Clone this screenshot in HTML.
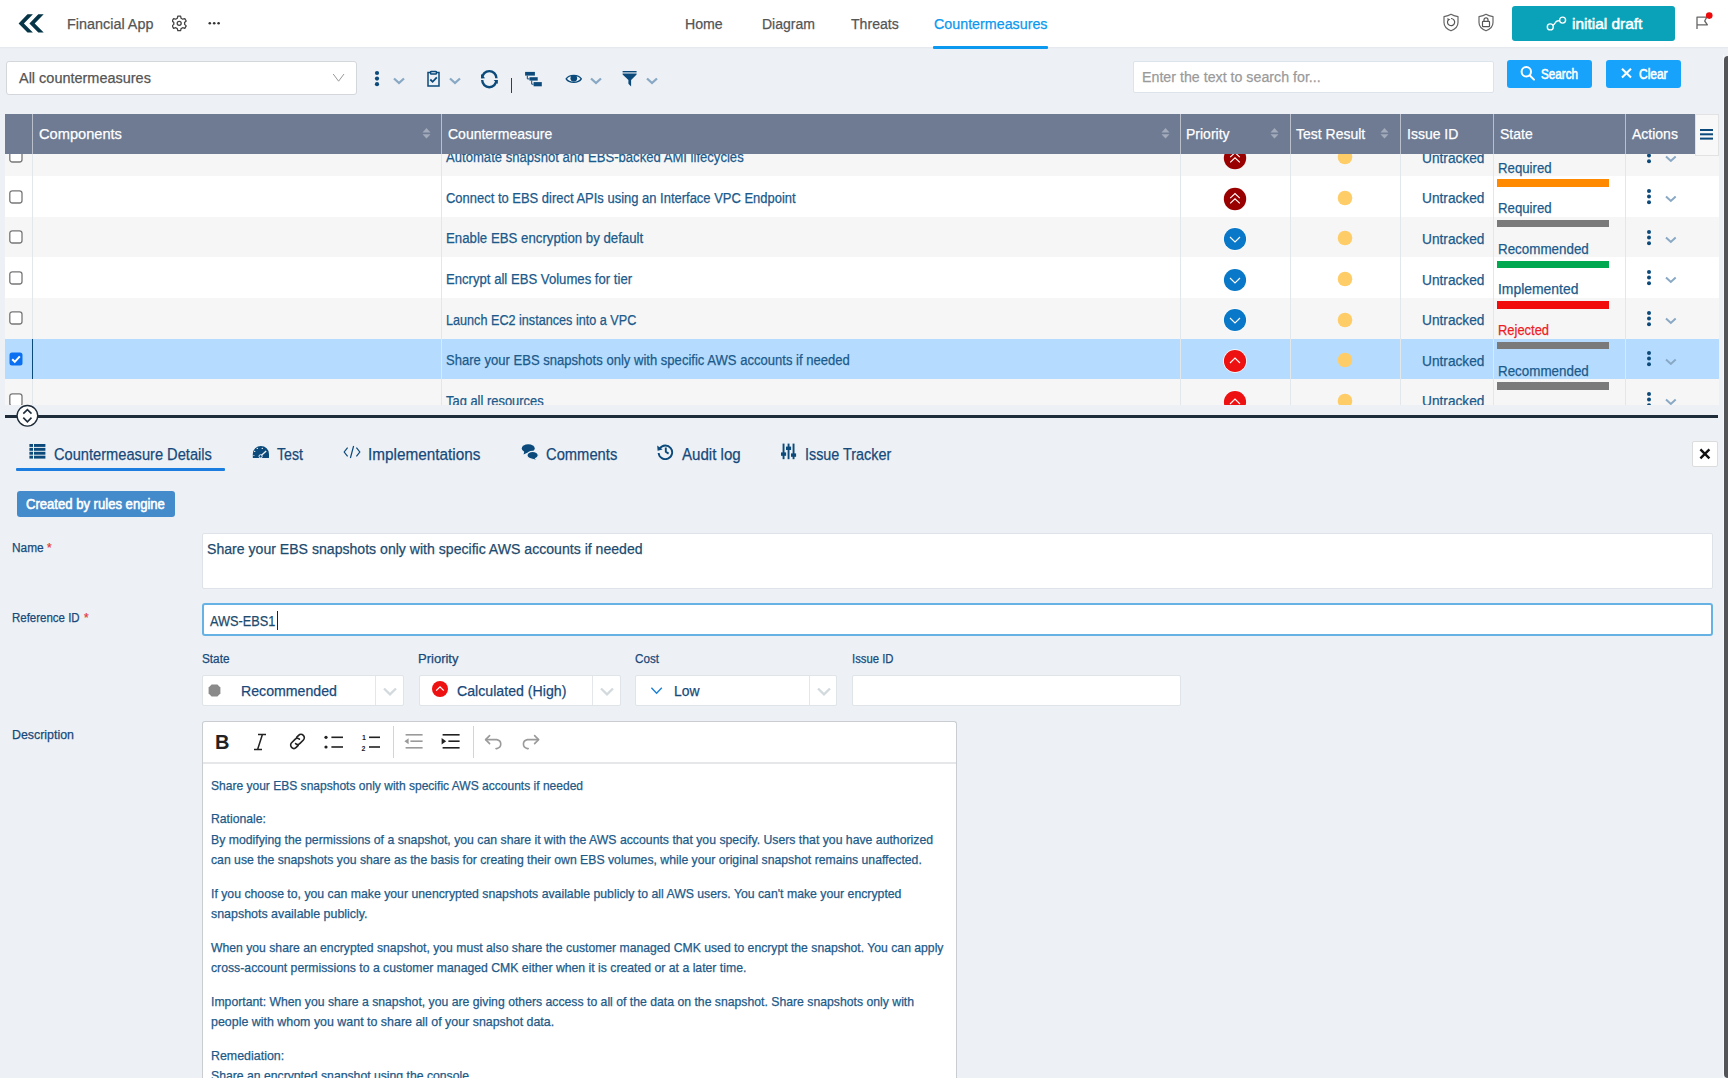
<!DOCTYPE html><html><head><meta charset="utf-8"><style>
html,body{margin:0;padding:0;width:1728px;height:1080px;overflow:hidden;background:#edf1f5;font-family:"Liberation Sans",sans-serif;}
.a{position:absolute;box-sizing:border-box;}
.t{position:absolute;white-space:nowrap;transform-origin:0 0;-webkit-text-stroke:0.25px currentColor;}
</style></head><body>
<div class="a" style="left:0px;top:0px;width:1728px;height:47px;background:#fff;"></div>
<div class="a" style="left:0px;top:47px;width:1728px;height:2px;background:linear-gradient(#e4e8ec,#edf1f5);"></div>
<svg class="a" style="left:14px;top:10px;" width="34" height="26" viewBox="0 0 34 26"><polygon fill="#063548" points="13.5,4.2 18.9,4.2 9.9,13.5 18.9,22.6 13.5,22.6 4.6,13.5"/><polygon fill="#063548" points="24.3,4.2 29.7,4.2 20.7,13.5 29.7,22.6 24.3,22.6 15.4,13.5"/></svg>
<div class="t" style="left:66.60px;top:15.63px;font-size:15.20px;line-height:15.20px;color:#555;transform:scaleX(0.9477);">Financial App</div>
<svg class="a" style="left:172px;top:15px;" width="16" height="17" viewBox="0 0 16 17"><g fill="none" stroke="#444" stroke-width="1.3" stroke-linejoin="round"><path d="M5.8,1.2 h2.8 l0.5,2.1 l1.6,0.9 l2.1,-0.6 l1.4,2.4 l-1.6,1.5 v1.9 l1.6,1.5 l-1.4,2.4 l-2.1,-0.6 l-1.6,0.9 l-0.5,2.1 h-2.8 l-0.5,-2.1 l-1.6,-0.9 l-2.1,0.6 l-1.4,-2.4 l1.6,-1.5 v-1.9 l-1.6,-1.5 l1.4,-2.4 l2.1,0.6 l1.6,-0.9 z"/><circle cx="7.2" cy="8.3" r="2"/></g></svg>
<svg class="a" style="left:206px;top:20px;" width="16" height="6" viewBox="0 0 16 6"><g fill="#333"><circle cx="3.8" cy="3.2" r="1.3"/><circle cx="8.2" cy="3.2" r="1.3"/><circle cx="12.6" cy="3.2" r="1.3"/></g></svg>
<div class="t" style="left:684.60px;top:15.63px;font-size:15.20px;line-height:15.20px;color:#555;transform:scaleX(0.9314);">Home</div>
<div class="t" style="left:761.70px;top:15.63px;font-size:15.20px;line-height:15.20px;color:#555;transform:scaleX(0.9224);">Diagram</div>
<div class="t" style="left:850.50px;top:15.63px;font-size:15.20px;line-height:15.20px;color:#555;transform:scaleX(0.9277);">Threats</div>
<div class="t" style="left:934.00px;top:15.63px;font-size:15.20px;line-height:15.20px;color:#0b98ef;transform:scaleX(0.9401);">Countermeasures</div>
<div class="a" style="left:933px;top:46px;width:115px;height:2.5px;background:#0b98ef;border-radius:1px;"></div>
<svg class="a" style="left:1443px;top:13px;" width="16" height="19" viewBox="0 0 16 19"><path d="M8,1.3 C10,2.6 12.3,3.2 15,3.6 V9.5 C15,13.5 12,16.2 8,17.8 C4,16.2 1,13.5 1,9.5 V3.6 C3.7,3.2 6,2.6 8,1.3 Z" fill="none" stroke="#666" stroke-width="1.2" stroke-linejoin="round"/><path d="M5.3,6.8 A3.6,3.6 0 1 0 8,5.5" fill="none" stroke="#555" stroke-width="1.2"/><path d="M4.2,5 L5,7.8 L7.4,6.6 Z" fill="#555"/></svg>
<svg class="a" style="left:1478px;top:13px;" width="16" height="19" viewBox="0 0 16 19"><path d="M8,1.3 C10,2.6 12.3,3.2 15,3.6 V9.5 C15,13.5 12,16.2 8,17.8 C4,16.2 1,13.5 1,9.5 V3.6 C3.7,3.2 6,2.6 8,1.3 Z" fill="none" stroke="#666" stroke-width="1.2" stroke-linejoin="round"/><rect x="4.5" y="8.3" width="7" height="5.4" rx="0.8" fill="none" stroke="#555" stroke-width="1.2"/><path d="M6,8.3 V6.8 A2,2 0 0 1 10,6.8 V8.3" fill="none" stroke="#555" stroke-width="1.2"/></svg>
<div class="a" style="left:1512px;top:5.5px;width:163px;height:35.5px;background:#0aa2b8;border-radius:3px;"></div>
<svg class="a" style="left:1545px;top:16px;" width="24" height="16" viewBox="0 0 24 16"><g fill="none" stroke="#fff" stroke-width="1.4"><circle cx="5.3" cy="10.9" r="3"/><circle cx="17.6" cy="4.1" r="3"/><path d="M7.6,9.4 C10.5,8.5 9.8,5.5 12.3,5 L14.6,4.6"/></g></svg>
<div class="t" style="left:1572.00px;top:15.53px;font-size:15.20px;line-height:15.20px;color:#fff;-webkit-text-stroke:0.55px currentColor;transform:scaleX(1.0171);">initial draft</div>
<svg class="a" style="left:1692px;top:10px;" width="22" height="22" viewBox="0 0 22 22"><path d="M5,19 V7.2 H14.7 L12.7,11 L15.4,14.8 H5" fill="none" stroke="#666" stroke-width="1.3" stroke-linejoin="round"/><circle cx="17.25" cy="5.6" r="3.3" fill="#ee0a0a"/></svg>
<div class="a" style="left:6px;top:60.5px;width:351px;height:34px;background:#fff;border:1px solid #d3d6da;border-radius:3px;"></div>
<div class="t" style="left:18.75px;top:70.13px;font-size:15.20px;line-height:15.20px;color:#555;transform:scaleX(0.9527);">All countermeasures</div>
<svg class="a" style="left:330px;top:70px;" width="16" height="14" viewBox="0 0 16 14"><path d="M3.2,4 L8.6,11.2 L14,4" fill="none" stroke="#999" stroke-width="1"/></svg>
<svg class="a" style="left:373.4px;top:69px;" width="8" height="19" viewBox="0 0 8 19"><g fill="#0b4a7b"><circle cx="4" cy="4" r="2.1"/><circle cx="4" cy="9.6" r="2.1"/><circle cx="4" cy="15.2" r="2.1"/></g></svg>
<svg class="a" style="left:393px;top:77px;" width="12" height="8" viewBox="0 0 12 8"><path d="M1,1.5 L6.0,6 L11,1.5" fill="none" stroke="#88a8c4" stroke-width="2.3"/></svg>
<svg class="a" style="left:426px;top:70px;" width="15" height="18" viewBox="0 0 15 18"><g fill="none" stroke="#0b4a7b" stroke-width="1.5"><path d="M4,2.6 H2 V16 H13 V2.6 H11"/><rect x="4.6" y="1.4" width="5.8" height="2.6" rx="0.6"/><path d="M4.3,9.5 L6.6,11.8 L10.8,7.4" stroke-width="1.8"/></g></svg>
<svg class="a" style="left:449px;top:77px;" width="12" height="8" viewBox="0 0 12 8"><path d="M1,1.5 L6.0,6 L11,1.5" fill="none" stroke="#88a8c4" stroke-width="2.3"/></svg>
<svg class="a" style="left:479px;top:69px;" width="21" height="21" viewBox="0 0 21 21"><g fill="none" stroke="#0b4a7b" stroke-width="2.4"><path d="M3.2,9.2 A7.1,7.1 0 0 1 17.4,9.2"/><path d="M3.2,11.1 A7.1,7.1 0 0 0 17.4,11.1"/></g><path d="M2,4.9 L2,9.2 L6.2,9.2 Z" fill="#0b4a7b"/><path d="M14.6,11.1 L18.8,11.1 L18.8,15.1 Z" fill="#0b4a7b"/></svg>
<div class="a" style="left:511px;top:78px;width:1.3px;height:14.7px;background:#0b4a7b;"></div>
<svg class="a" style="left:524px;top:71px;" width="20" height="17" viewBox="0 0 20 17"><g fill="#0b4a7b"><rect x="1.1" y="0.9" width="9.8" height="3.7"/><rect x="5.5" y="6.2" width="8.2" height="3.4"/><rect x="9.6" y="11.1" width="8.2" height="4.2"/></g><g fill="none" stroke="#0b4a7b" stroke-width="1"><path d="M3.3,4.6 V7.9 H5.5"/><path d="M7.7,9.6 V13.2 H9.6"/></g></svg>
<svg class="a" style="left:565px;top:73px;" width="18" height="13" viewBox="0 0 18 13"><path d="M1.2,5.8 C4,1.2 13.5,1.2 16.3,5.8 C13.5,10.4 4,10.4 1.2,5.8 Z" fill="none" stroke="#0b4a7b" stroke-width="1.4"/><circle cx="8.8" cy="5.2" r="3.3" fill="#0b4a7b"/></svg>
<svg class="a" style="left:590px;top:77px;" width="12" height="8" viewBox="0 0 12 8"><path d="M1,1.5 L6.0,6 L11,1.5" fill="none" stroke="#88a8c4" stroke-width="2.3"/></svg>
<svg class="a" style="left:622px;top:70px;" width="16" height="18" viewBox="0 0 16 18"><g fill="#0b4a7b"><rect x="0.6" y="1" width="14" height="1.4"/><path d="M0.6,3.4 H14.6 V4.6 L9.1,10 V16.4 L6.4,13.8 V10 L0.6,4.6 Z"/></g></svg>
<svg class="a" style="left:645.5px;top:77px;" width="12" height="8" viewBox="0 0 12 8"><path d="M1,1.5 L6.0,6 L11,1.5" fill="none" stroke="#88a8c4" stroke-width="2.3"/></svg>
<div class="a" style="left:1133px;top:60.5px;width:361px;height:32px;background:#fff;border:1px solid #dce3ea;border-radius:2px;"></div>
<div class="t" style="left:1141.60px;top:69.33px;font-size:15.20px;line-height:15.20px;color:#9a9a9a;transform:scaleX(0.9366);">Enter the text to search for...</div>
<div class="a" style="left:1507px;top:60px;width:85px;height:28.2px;background:#17a3fc;border-radius:3px;"></div>
<svg class="a" style="left:1519px;top:65px;" width="18" height="17" viewBox="0 0 18 17"><g fill="none" stroke="#fff" stroke-width="2"><circle cx="7.3" cy="6.8" r="4.7"/><path d="M10.6,10.2 L15,14.6" stroke-linecap="round"/></g></svg>
<div class="t" style="left:1540.80px;top:67.64px;font-size:13.77px;line-height:13.77px;color:#fff;-webkit-text-stroke:0.55px currentColor;transform:scaleX(0.8473);">Search</div>
<div class="a" style="left:1605.7px;top:60px;width:75.5px;height:28.2px;background:#17a3fc;border-radius:3px;"></div>
<svg class="a" style="left:1620px;top:67px;" width="13" height="12" viewBox="0 0 13 12"><path d="M2,1.8 L11,10.4 M11,1.8 L2,10.4" stroke="#fff" stroke-width="2.1"/></svg>
<div class="t" style="left:1638.60px;top:67.64px;font-size:13.77px;line-height:13.77px;color:#fff;-webkit-text-stroke:0.55px currentColor;transform:scaleX(0.8687);">Clear</div>
<div class="a" style="left:5px;top:113.5px;width:1689.7px;height:40.5px;background:#6e7b93;"></div>
<div class="a" style="left:5px;top:154px;width:1713.5px;height:250.7px;overflow:hidden;">
<div class="a" style="left:0px;top:-18.4px;width:1713.5px;height:41.0px;background:#f6f6f6;"></div>
<div class="a" style="left:0px;top:22.2px;width:1713.5px;height:41.0px;background:#ffffff;"></div>
<div class="a" style="left:0px;top:62.8px;width:1713.5px;height:41.0px;background:#f6f6f6;"></div>
<div class="a" style="left:0px;top:103.4px;width:1713.5px;height:41.0px;background:#ffffff;"></div>
<div class="a" style="left:0px;top:144.0px;width:1713.5px;height:41.0px;background:#f6f6f6;"></div>
<div class="a" style="left:0px;top:184.6px;width:1713.5px;height:41.0px;background:#b5dcfe;"></div>
<div class="a" style="left:0px;top:225.2px;width:1713.5px;height:41.0px;background:#f6f6f6;"></div>
<svg class="a" style="left:4px;top:-5.100000000000005px;" width="14" height="14" viewBox="0 0 14 14"><rect x="0.8" y="0.8" width="12.2" height="12.2" rx="2.5" fill="#fff" stroke="#777" stroke-width="1.3"/></svg>
<div class="t" style="left:440.80px;top:-3.76px;font-size:14.25px;line-height:14.25px;color:#1b5a8b;transform:scaleX(0.9189);">Automate snapshot and EBS-backed AMI lifecycles</div>
<svg class="a" style="left:1218px;top:-8.100000000000005px;" width="24" height="24" viewBox="0 0 24 24"><circle cx="12" cy="12" r="11.2" fill="#990000"/><path d="M7.2,11.2 L12,6.6 L16.8,11.2 M7.2,16.4 L12,11.8 L16.8,16.4" fill="none" stroke="#fff" stroke-width="1.1"/></svg>
<svg class="a" style="left:1332px;top:-4.900000000000005px;" width="16" height="16" viewBox="0 0 16 16"><circle cx="8" cy="8" r="7.3" fill="#ffcd68"/></svg>
<div class="t" style="left:1416.50px;top:-3.26px;font-size:14.25px;line-height:14.25px;color:#1b5a8b;transform:scaleX(0.9618);">Untracked</div>
<div class="t" style="left:1493.00px;top:6.64px;font-size:14.25px;line-height:14.25px;color:#1b5a8b;transform:scaleX(0.9282);">Required</div>
<div class="a" style="left:1492.2px;top:25.4px;width:111.8px;height:7.4px;background:#ff8a00;"></div>
<svg class="a" style="left:1640px;top:-7.700000000000005px;" width="8" height="19" viewBox="0 0 8 19"><g fill="#0b4a7b"><circle cx="4" cy="4" r="2"/><circle cx="4" cy="9.6" r="2"/><circle cx="4" cy="15.2" r="2"/></g></svg>
<svg class="a" style="left:1660px;top:0.4999999999999951px;" width="11.7" height="7.9" viewBox="0 0 11.7 7.9"><path d="M1,1.5 L5.85,5.9 L10.7,1.5" fill="none" stroke="#88a8c4" stroke-width="2"/></svg>
<svg class="a" style="left:4px;top:35.499999999999986px;" width="14" height="14" viewBox="0 0 14 14"><rect x="0.8" y="0.8" width="12.2" height="12.2" rx="2.5" fill="#fff" stroke="#777" stroke-width="1.3"/></svg>
<div class="t" style="left:440.80px;top:36.84px;font-size:14.25px;line-height:14.25px;color:#1b5a8b;transform:scaleX(0.9100);">Connect to EBS direct APIs using an Interface VPC Endpoint</div>
<svg class="a" style="left:1218px;top:32.499999999999986px;" width="24" height="24" viewBox="0 0 24 24"><circle cx="12" cy="12" r="11.2" fill="#990000"/><path d="M7.2,11.2 L12,6.6 L16.8,11.2 M7.2,16.4 L12,11.8 L16.8,16.4" fill="none" stroke="#fff" stroke-width="1.1"/></svg>
<svg class="a" style="left:1332px;top:35.69999999999999px;" width="16" height="16" viewBox="0 0 16 16"><circle cx="8" cy="8" r="7.3" fill="#ffcd68"/></svg>
<div class="t" style="left:1416.50px;top:37.34px;font-size:14.25px;line-height:14.25px;color:#1b5a8b;transform:scaleX(0.9618);">Untracked</div>
<div class="t" style="left:1493.00px;top:47.24px;font-size:14.25px;line-height:14.25px;color:#1b5a8b;transform:scaleX(0.9282);">Required</div>
<div class="a" style="left:1492.2px;top:66.0px;width:111.8px;height:7.4px;background:#7a7a7a;"></div>
<svg class="a" style="left:1640px;top:32.899999999999984px;" width="8" height="19" viewBox="0 0 8 19"><g fill="#0b4a7b"><circle cx="4" cy="4" r="2"/><circle cx="4" cy="9.6" r="2"/><circle cx="4" cy="15.2" r="2"/></g></svg>
<svg class="a" style="left:1660px;top:41.09999999999999px;" width="11.7" height="7.9" viewBox="0 0 11.7 7.9"><path d="M1,1.5 L5.85,5.9 L10.7,1.5" fill="none" stroke="#88a8c4" stroke-width="2"/></svg>
<svg class="a" style="left:4px;top:76.09999999999998px;" width="14" height="14" viewBox="0 0 14 14"><rect x="0.8" y="0.8" width="12.2" height="12.2" rx="2.5" fill="#fff" stroke="#777" stroke-width="1.3"/></svg>
<div class="t" style="left:440.80px;top:77.44px;font-size:14.25px;line-height:14.25px;color:#1b5a8b;transform:scaleX(0.9288);">Enable EBS encryption by default</div>
<svg class="a" style="left:1218px;top:73.09999999999998px;" width="24" height="24" viewBox="0 0 24 24"><circle cx="12" cy="12" r="11.8" fill="#fff"/><circle cx="12" cy="12" r="11.1" fill="#0a78c8"/><path d="M7,10 L12,15 L17,10" fill="none" stroke="#fff" stroke-width="1.1"/></svg>
<svg class="a" style="left:1332px;top:76.29999999999998px;" width="16" height="16" viewBox="0 0 16 16"><circle cx="8" cy="8" r="7.3" fill="#ffcd68"/></svg>
<div class="t" style="left:1416.50px;top:77.94px;font-size:14.25px;line-height:14.25px;color:#1b5a8b;transform:scaleX(0.9618);">Untracked</div>
<div class="t" style="left:1493.00px;top:87.84px;font-size:14.25px;line-height:14.25px;color:#1b5a8b;transform:scaleX(0.9398);">Recommended</div>
<div class="a" style="left:1492.2px;top:106.6px;width:111.8px;height:7.4px;background:#00a850;"></div>
<svg class="a" style="left:1640px;top:73.49999999999999px;" width="8" height="19" viewBox="0 0 8 19"><g fill="#0b4a7b"><circle cx="4" cy="4" r="2"/><circle cx="4" cy="9.6" r="2"/><circle cx="4" cy="15.2" r="2"/></g></svg>
<svg class="a" style="left:1660px;top:81.69999999999997px;" width="11.7" height="7.9" viewBox="0 0 11.7 7.9"><path d="M1,1.5 L5.85,5.9 L10.7,1.5" fill="none" stroke="#88a8c4" stroke-width="2"/></svg>
<svg class="a" style="left:4px;top:116.69999999999997px;" width="14" height="14" viewBox="0 0 14 14"><rect x="0.8" y="0.8" width="12.2" height="12.2" rx="2.5" fill="#fff" stroke="#777" stroke-width="1.3"/></svg>
<div class="t" style="left:440.80px;top:118.04px;font-size:14.25px;line-height:14.25px;color:#1b5a8b;transform:scaleX(0.9213);">Encrypt all EBS Volumes for tier</div>
<svg class="a" style="left:1218px;top:113.69999999999997px;" width="24" height="24" viewBox="0 0 24 24"><circle cx="12" cy="12" r="11.8" fill="#fff"/><circle cx="12" cy="12" r="11.1" fill="#0a78c8"/><path d="M7,10 L12,15 L17,10" fill="none" stroke="#fff" stroke-width="1.1"/></svg>
<svg class="a" style="left:1332px;top:116.89999999999998px;" width="16" height="16" viewBox="0 0 16 16"><circle cx="8" cy="8" r="7.3" fill="#ffcd68"/></svg>
<div class="t" style="left:1416.50px;top:118.54px;font-size:14.25px;line-height:14.25px;color:#1b5a8b;transform:scaleX(0.9618);">Untracked</div>
<div class="t" style="left:1493.00px;top:128.44px;font-size:14.25px;line-height:14.25px;color:#1b5a8b;transform:scaleX(0.9761);">Implemented</div>
<div class="a" style="left:1492.2px;top:147.2px;width:111.8px;height:7.4px;background:#f20d0d;"></div>
<svg class="a" style="left:1640px;top:114.09999999999998px;" width="8" height="19" viewBox="0 0 8 19"><g fill="#0b4a7b"><circle cx="4" cy="4" r="2"/><circle cx="4" cy="9.6" r="2"/><circle cx="4" cy="15.2" r="2"/></g></svg>
<svg class="a" style="left:1660px;top:122.29999999999997px;" width="11.7" height="7.9" viewBox="0 0 11.7 7.9"><path d="M1,1.5 L5.85,5.9 L10.7,1.5" fill="none" stroke="#88a8c4" stroke-width="2"/></svg>
<svg class="a" style="left:4px;top:157.3px;" width="14" height="14" viewBox="0 0 14 14"><rect x="0.8" y="0.8" width="12.2" height="12.2" rx="2.5" fill="#fff" stroke="#777" stroke-width="1.3"/></svg>
<div class="t" style="left:440.80px;top:158.64px;font-size:14.25px;line-height:14.25px;color:#1b5a8b;transform:scaleX(0.8865);">Launch EC2 instances into a VPC</div>
<svg class="a" style="left:1218px;top:154.3px;" width="24" height="24" viewBox="0 0 24 24"><circle cx="12" cy="12" r="11.8" fill="#fff"/><circle cx="12" cy="12" r="11.1" fill="#0a78c8"/><path d="M7,10 L12,15 L17,10" fill="none" stroke="#fff" stroke-width="1.1"/></svg>
<svg class="a" style="left:1332px;top:157.5px;" width="16" height="16" viewBox="0 0 16 16"><circle cx="8" cy="8" r="7.3" fill="#ffcd68"/></svg>
<div class="t" style="left:1416.50px;top:159.14px;font-size:14.25px;line-height:14.25px;color:#1b5a8b;transform:scaleX(0.9618);">Untracked</div>
<div class="t" style="left:1493.00px;top:169.04px;font-size:14.25px;line-height:14.25px;color:#ee1c25;transform:scaleX(0.9072);">Rejected</div>
<div class="a" style="left:1492.2px;top:187.8px;width:111.8px;height:7.4px;background:#7a7a7a;"></div>
<svg class="a" style="left:1640px;top:154.70000000000002px;" width="8" height="19" viewBox="0 0 8 19"><g fill="#0b4a7b"><circle cx="4" cy="4" r="2"/><circle cx="4" cy="9.6" r="2"/><circle cx="4" cy="15.2" r="2"/></g></svg>
<svg class="a" style="left:1660px;top:162.9px;" width="11.7" height="7.9" viewBox="0 0 11.7 7.9"><path d="M1,1.5 L5.85,5.9 L10.7,1.5" fill="none" stroke="#88a8c4" stroke-width="2"/></svg>
<svg class="a" style="left:4px;top:197.90000000000003px;" width="14" height="14" viewBox="0 0 14 14"><rect x="0.5" y="0.5" width="13" height="13" rx="2.5" fill="#0b6ff2"/><path d="M3.2,7.2 L5.8,9.8 L10.8,4.3" fill="none" stroke="#fff" stroke-width="2"/></svg>
<div class="t" style="left:440.80px;top:199.24px;font-size:14.25px;line-height:14.25px;color:#1b5a8b;transform:scaleX(0.9163);">Share your EBS snapshots only with specific AWS accounts if needed</div>
<svg class="a" style="left:1218px;top:194.90000000000003px;" width="24" height="24" viewBox="0 0 24 24"><circle cx="12" cy="12" r="11.8" fill="#fff"/><circle cx="12" cy="12" r="11.1" fill="#ee1111"/><path d="M7,14 L12,9 L17,14" fill="none" stroke="#fff" stroke-width="1.1"/></svg>
<svg class="a" style="left:1332px;top:198.10000000000002px;" width="16" height="16" viewBox="0 0 16 16"><circle cx="8" cy="8" r="7.3" fill="#ffcd68"/></svg>
<div class="t" style="left:1416.50px;top:199.74px;font-size:14.25px;line-height:14.25px;color:#1b5a8b;transform:scaleX(0.9618);">Untracked</div>
<div class="t" style="left:1493.00px;top:209.64px;font-size:14.25px;line-height:14.25px;color:#1b5a8b;transform:scaleX(0.9398);">Recommended</div>
<div class="a" style="left:1492.2px;top:228.4px;width:111.8px;height:7.4px;background:#7a7a7a;"></div>
<svg class="a" style="left:1640px;top:195.30000000000004px;" width="8" height="19" viewBox="0 0 8 19"><g fill="#0b4a7b"><circle cx="4" cy="4" r="2"/><circle cx="4" cy="9.6" r="2"/><circle cx="4" cy="15.2" r="2"/></g></svg>
<svg class="a" style="left:1660px;top:203.50000000000003px;" width="11.7" height="7.9" viewBox="0 0 11.7 7.9"><path d="M1,1.5 L5.85,5.9 L10.7,1.5" fill="none" stroke="#88a8c4" stroke-width="2"/></svg>
<svg class="a" style="left:4px;top:238.5px;" width="14" height="14" viewBox="0 0 14 14"><rect x="0.8" y="0.8" width="12.2" height="12.2" rx="2.5" fill="#fff" stroke="#777" stroke-width="1.3"/></svg>
<div class="t" style="left:440.80px;top:239.84px;font-size:14.25px;line-height:14.25px;color:#1b5a8b;transform:scaleX(0.9069);">Tag all resources</div>
<svg class="a" style="left:1218px;top:235.5px;" width="24" height="24" viewBox="0 0 24 24"><circle cx="12" cy="12" r="11.8" fill="#fff"/><circle cx="12" cy="12" r="11.1" fill="#ee1111"/><path d="M7,14 L12,9 L17,14" fill="none" stroke="#fff" stroke-width="1.1"/></svg>
<svg class="a" style="left:1332px;top:238.7px;" width="16" height="16" viewBox="0 0 16 16"><circle cx="8" cy="8" r="7.3" fill="#ffcd68"/></svg>
<div class="t" style="left:1416.50px;top:240.34px;font-size:14.25px;line-height:14.25px;color:#1b5a8b;transform:scaleX(0.9618);">Untracked</div>
<svg class="a" style="left:1640px;top:235.9px;" width="8" height="19" viewBox="0 0 8 19"><g fill="#0b4a7b"><circle cx="4" cy="4" r="2"/><circle cx="4" cy="9.6" r="2"/><circle cx="4" cy="15.2" r="2"/></g></svg>
<svg class="a" style="left:1660px;top:244.1px;" width="11.7" height="7.9" viewBox="0 0 11.7 7.9"><path d="M1,1.5 L5.85,5.9 L10.7,1.5" fill="none" stroke="#88a8c4" stroke-width="2"/></svg>
<div class="a" style="left:27px;top:0px;width:1px;height:250.7px;background:#e1e7eb;"></div>
<div class="a" style="left:436px;top:0px;width:1px;height:250.7px;background:#e1e7eb;"></div>
<div class="a" style="left:1175px;top:0px;width:1px;height:250.7px;background:#e1e7eb;"></div>
<div class="a" style="left:1285px;top:0px;width:1px;height:250.7px;background:#e1e7eb;"></div>
<div class="a" style="left:1395px;top:0px;width:1px;height:250.7px;background:#e1e7eb;"></div>
<div class="a" style="left:1488px;top:0px;width:1px;height:250.7px;background:#e1e7eb;"></div>
<div class="a" style="left:1620px;top:0px;width:1px;height:250.7px;background:#e1e7eb;"></div>
<div class="a" style="left:27px;top:184.6px;width:1px;height:40.6px;background:#0b4a7b;"></div>
</div>
<div class="a" style="left:32px;top:113.5px;width:1px;height:40.5px;background:#b9c0cc;"></div>
<div class="a" style="left:441px;top:113.5px;width:1px;height:40.5px;background:#b9c0cc;"></div>
<div class="a" style="left:1180px;top:113.5px;width:1px;height:40.5px;background:#b9c0cc;"></div>
<div class="a" style="left:1290px;top:113.5px;width:1px;height:40.5px;background:#b9c0cc;"></div>
<div class="a" style="left:1400px;top:113.5px;width:1px;height:40.5px;background:#b9c0cc;"></div>
<div class="a" style="left:1493px;top:113.5px;width:1px;height:40.5px;background:#b9c0cc;"></div>
<div class="a" style="left:1625px;top:113.5px;width:1px;height:40.5px;background:#b9c0cc;"></div>
<div class="t" style="left:38.50px;top:126.13px;font-size:15.20px;line-height:15.20px;color:#fff;transform:scaleX(0.9631);">Components</div>
<svg class="a" style="left:421.5px;top:127px;" width="9" height="13" viewBox="0 0 9 13"><g fill="#a3abbb"><path d="M0.5,5.4 L4.5,1 L8.5,5.4 Z"/><path d="M0.5,7.2 L4.5,11.6 L8.5,7.2 Z"/></g></svg>
<div class="t" style="left:448.00px;top:126.13px;font-size:15.20px;line-height:15.20px;color:#fff;transform:scaleX(0.9211);">Countermeasure</div>
<svg class="a" style="left:1160.5px;top:127px;" width="9" height="13" viewBox="0 0 9 13"><g fill="#a3abbb"><path d="M0.5,5.4 L4.5,1 L8.5,5.4 Z"/><path d="M0.5,7.2 L4.5,11.6 L8.5,7.2 Z"/></g></svg>
<div class="t" style="left:1186.30px;top:126.13px;font-size:15.20px;line-height:15.20px;color:#fff;transform:scaleX(0.9211);">Priority</div>
<svg class="a" style="left:1270px;top:127px;" width="9" height="13" viewBox="0 0 9 13"><g fill="#a3abbb"><path d="M0.5,5.4 L4.5,1 L8.5,5.4 Z"/><path d="M0.5,7.2 L4.5,11.6 L8.5,7.2 Z"/></g></svg>
<div class="t" style="left:1296.00px;top:126.13px;font-size:15.20px;line-height:15.20px;color:#fff;transform:scaleX(0.9211);">Test Result</div>
<svg class="a" style="left:1380px;top:127px;" width="9" height="13" viewBox="0 0 9 13"><g fill="#a3abbb"><path d="M0.5,5.4 L4.5,1 L8.5,5.4 Z"/><path d="M0.5,7.2 L4.5,11.6 L8.5,7.2 Z"/></g></svg>
<div class="t" style="left:1406.60px;top:126.13px;font-size:15.20px;line-height:15.20px;color:#fff;transform:scaleX(0.9211);">Issue ID</div>
<div class="t" style="left:1499.60px;top:126.13px;font-size:15.20px;line-height:15.20px;color:#fff;transform:scaleX(0.9211);">State</div>
<div class="t" style="left:1631.50px;top:126.13px;font-size:15.20px;line-height:15.20px;color:#fff;transform:scaleX(0.9211);">Actions</div>
<div class="a" style="left:1694.5px;top:113.5px;width:24px;height:42px;background:#f8f8f8;border:1px solid #e2e2e2;"></div>
<svg class="a" style="left:1699px;top:127px;" width="16" height="16" viewBox="0 0 16 16"><g fill="#0b4a7b"><rect x="1" y="2" width="13" height="2"/><rect x="1" y="6.3" width="13" height="2"/><rect x="1" y="10.6" width="13" height="2"/></g></svg>
<div class="a" style="left:5px;top:415px;width:1713px;height:3px;background:#1f2d3b;"></div>
<svg class="a" style="left:16px;top:404px;" width="23" height="23" viewBox="0 0 23 23"><circle cx="11.4" cy="11.8" r="10.3" fill="#fff" stroke="#1f2d3b" stroke-width="1.3"/><path d="M7.3,9.6 L11.4,5.6 L15.5,9.6 M7.3,13.6 L11.4,17.8 L15.5,13.6" fill="none" stroke="#1f2d3b" stroke-width="1.6"/></svg>
<svg class="a" style="left:29px;top:443px;" width="18" height="17" viewBox="0 0 18 17"><g fill="#0b4a7b"><rect x="0.4" y="1" width="3.6" height="2.9"/><rect x="5" y="1" width="11.4" height="2.9"/><rect x="0.4" y="4.9" width="3.6" height="2.9"/><rect x="5" y="4.9" width="11.4" height="2.9"/><rect x="0.4" y="8.8" width="3.6" height="2.9"/><rect x="5" y="8.8" width="11.4" height="2.9"/><rect x="0.4" y="12.7" width="3.6" height="2.9"/><rect x="5" y="12.7" width="11.4" height="2.9"/></g></svg>
<div class="t" style="left:53.90px;top:445.53px;font-size:16.15px;line-height:16.15px;color:#17497a;transform:scaleX(0.9071);">Countermeasure Details</div>
<div class="a" style="left:16.4px;top:468.3px;width:208.6px;height:3.1px;background:#1b7de0;border-radius:1px;"></div>
<svg class="a" style="left:252px;top:445px;" width="18" height="15" viewBox="0 0 18 15"><path d="M0.8,9 A8.1,8.1 0 0 1 17,9 V12.4 Q17,13 16.4,13 H1.4 Q0.8,13 0.8,12.4 Z" fill="#0b4a7b"/><g fill="#edf1f5"><circle cx="5.3" cy="3.4" r="0.7"/><circle cx="10.3" cy="3.4" r="0.7"/><circle cx="2.7" cy="6.4" r="0.7"/><circle cx="1.9" cy="10.5" r="0.6"/></g><path d="M9.2,10.6 L14.2,6" stroke="#edf1f5" stroke-width="1.3"/><circle cx="8.6" cy="11.3" r="1.6" fill="#0b4a7b" stroke="#edf1f5" stroke-width="1"/></svg>
<div class="t" style="left:276.90px;top:445.53px;font-size:16.15px;line-height:16.15px;color:#17497a;transform:scaleX(0.8773);">Test</div>
<svg class="a" style="left:343px;top:444px;" width="18" height="16" viewBox="0 0 18 16"><path d="M4.6,3.6 L1.2,8 L4.6,12.4 M13.4,3.6 L16.8,8 L13.4,12.4 M10.6,2 L7.4,14" fill="none" stroke="#0b4a7b" stroke-width="1.2"/></svg>
<div class="t" style="left:368.20px;top:445.53px;font-size:16.15px;line-height:16.15px;color:#17497a;transform:scaleX(0.9497);">Implementations</div>
<svg class="a" style="left:521px;top:443px;" width="18" height="18" viewBox="0 0 18 18"><g fill="#0b4a7b"><ellipse cx="7.25" cy="5.4" rx="6.5" ry="4.2"/><path d="M3.4,8 L2.6,11.6 L7.4,9.2 Z"/></g><ellipse cx="11.6" cy="12.3" rx="5.6" ry="3.9" fill="#0b4a7b" stroke="#edf1f5" stroke-width="1.1"/><path d="M13.2,14.6 L14.8,16.8 L11.4,15.6 Z" fill="#0b4a7b"/></svg>
<div class="t" style="left:545.60px;top:445.53px;font-size:16.15px;line-height:16.15px;color:#17497a;transform:scaleX(0.9131);">Comments</div>
<svg class="a" style="left:656px;top:443px;" width="19" height="17" viewBox="0 0 19 17"><g fill="none" stroke="#0b4a7b" stroke-width="1.9"><path d="M3.8,5.4 A6.8,6.8 0 1 1 2.6,10"/><path d="M9.8,4.6 V8.8 L12.6,10.6"/></g><path d="M1.2,2.4 L1.6,7.8 L6.6,6.4 Z" fill="#0b4a7b"/></svg>
<div class="t" style="left:682.00px;top:445.53px;font-size:16.15px;line-height:16.15px;color:#17497a;transform:scaleX(0.9344);">Audit log</div>
<svg class="a" style="left:781px;top:443px;" width="17" height="17" viewBox="0 0 17 17"><g fill="#0b4a7b"><rect x="1.6" y="0.6" width="1.9" height="15.6"/><rect x="6.6" y="0.6" width="1.9" height="15.6"/><rect x="11.6" y="0.6" width="1.9" height="15.6"/><rect x="0" y="9.4" width="5.1" height="3.4"/><rect x="5" y="3.6" width="5.1" height="3.4"/><rect x="10" y="10.4" width="5.1" height="3.4"/></g></svg>
<div class="t" style="left:805.00px;top:445.53px;font-size:16.15px;line-height:16.15px;color:#17497a;transform:scaleX(0.8896);">Issue Tracker</div>
<div class="a" style="left:1692.4px;top:440.7px;width:25.8px;height:26px;background:#fff;border:1px solid #dcdcdc;border-radius:2px;"></div>
<svg class="a" style="left:1698px;top:447px;" width="14" height="14" viewBox="0 0 14 14"><path d="M2.4,2.4 L11.4,11.4 M11.4,2.4 L2.4,11.4" stroke="#111" stroke-width="2.4"/></svg>
<div class="a" style="left:17px;top:490.7px;width:157.5px;height:26.6px;background:#438bcb;border-radius:3px;"></div>
<div class="t" style="left:26.00px;top:497.54px;font-size:13.77px;line-height:13.77px;color:#fff;-webkit-text-stroke:0.55px currentColor;transform:scaleX(0.9502);">Created by rules engine</div>
<div class="t" style="left:11.60px;top:541.74px;font-size:12.82px;line-height:12.82px;color:#17497a;transform:scaleX(0.9257);">Name</div>
<div class="t" style="left:47.00px;top:541.74px;font-size:12.82px;line-height:12.82px;color:#e23b3b;transform:scaleX(0.9211);">*</div>
<div class="t" style="left:11.60px;top:612.14px;font-size:12.82px;line-height:12.82px;color:#17497a;transform:scaleX(0.8962);">Reference ID</div>
<div class="t" style="left:83.70px;top:612.14px;font-size:12.82px;line-height:12.82px;color:#e23b3b;transform:scaleX(0.9211);">*</div>
<div class="a" style="left:202px;top:533.3px;width:1510.5px;height:56px;background:#fff;border:1px solid #dde3e8;border-radius:2px;"></div>
<div class="t" style="left:207.00px;top:541.13px;font-size:15.20px;line-height:15.20px;color:#1d4b6e;transform:scaleX(0.9275);">Share your EBS snapshots only with specific AWS accounts if needed</div>
<div class="a" style="left:201.5px;top:603.4px;width:1511.5px;height:33px;background:#fff;border:2px solid #66b2e4;border-radius:3px;"></div>
<div class="t" style="left:210.00px;top:613.13px;font-size:15.20px;line-height:15.20px;color:#1d4b6e;transform:scaleX(0.8400);">AWS-EBS1</div>
<div class="a" style="left:276.5px;top:611px;width:1px;height:19px;background:#222;"></div>
<div class="t" style="left:201.70px;top:653.44px;font-size:12.82px;line-height:12.82px;color:#17497a;transform:scaleX(0.9183);">State</div>
<div class="t" style="left:418.40px;top:653.44px;font-size:12.82px;line-height:12.82px;color:#17497a;transform:scaleX(1.0154);">Priority</div>
<div class="t" style="left:635.00px;top:653.44px;font-size:12.82px;line-height:12.82px;color:#17497a;transform:scaleX(0.9106);">Cost</div>
<div class="t" style="left:852.00px;top:653.44px;font-size:12.82px;line-height:12.82px;color:#17497a;transform:scaleX(0.8817);">Issue ID</div>
<div class="a" style="left:202.3px;top:674.5px;width:201.89999999999998px;height:31.7px;background:#fff;border:1px solid #dfe4e8;border-radius:2px;"></div>
<div class="a" style="left:375.4px;top:675.5px;width:1px;height:29.7px;background:#e3e7ea;"></div>
<svg class="a" style="left:383.0px;top:687px;" width="14" height="9.4" viewBox="0 0 14 9.4"><path d="M1,1.5 L7.0,7.4 L13,1.5" fill="none" stroke="#d3dade" stroke-width="2.3"/></svg>
<svg class="a" style="left:208px;top:684px;" width="13" height="13" viewBox="0 0 13 13"><path d="M3.6,0.6 H9.4 L12.4,3.6 V9.4 L9.4,12.4 H3.6 L0.6,9.4 V3.6 Z" fill="#8a8a8a"/></svg>
<div class="t" style="left:240.50px;top:683.13px;font-size:15.20px;line-height:15.20px;color:#17497a;transform:scaleX(0.9315);">Recommended</div>
<div class="a" style="left:418.7px;top:674.5px;width:201.90000000000003px;height:31.7px;background:#fff;border:1px solid #dfe4e8;border-radius:2px;"></div>
<div class="a" style="left:592.4px;top:675.5px;width:1px;height:29.7px;background:#e3e7ea;"></div>
<svg class="a" style="left:600.0px;top:687px;" width="14" height="9.4" viewBox="0 0 14 9.4"><path d="M1,1.5 L7.0,7.4 L13,1.5" fill="none" stroke="#d3dade" stroke-width="2.3"/></svg>
<svg class="a" style="left:431px;top:680px;" width="18" height="18" viewBox="0 0 18 18"><circle cx="9" cy="9" r="8" fill="#ee1111"/><path d="M5.2,10.6 L9,6.8 L12.8,10.6" fill="none" stroke="#fff" stroke-width="1.3"/></svg>
<div class="t" style="left:456.90px;top:683.13px;font-size:15.20px;line-height:15.20px;color:#17497a;transform:scaleX(0.9325);">Calculated (High)</div>
<div class="a" style="left:635.4px;top:674.5px;width:201.89999999999998px;height:31.7px;background:#fff;border:1px solid #dfe4e8;border-radius:2px;"></div>
<div class="a" style="left:809px;top:675.5px;width:1px;height:29.7px;background:#e3e7ea;"></div>
<svg class="a" style="left:816.6px;top:687px;" width="14" height="9.4" viewBox="0 0 14 9.4"><path d="M1,1.5 L7.0,7.4 L13,1.5" fill="none" stroke="#d3dade" stroke-width="2.3"/></svg>
<svg class="a" style="left:650px;top:686px;" width="13" height="9" viewBox="0 0 13 9"><path d="M1.4,1.8 L6.6,7.2 L11.8,1.8" fill="none" stroke="#1a7fd8" stroke-width="1.4"/></svg>
<div class="t" style="left:673.60px;top:683.13px;font-size:15.20px;line-height:15.20px;color:#17497a;transform:scaleX(0.9142);">Low</div>
<div class="a" style="left:852px;top:674.5px;width:329px;height:31.5px;background:#fff;border:1px solid #dfe4e8;border-radius:2px;"></div>
<div class="t" style="left:11.50px;top:729.14px;font-size:12.82px;line-height:12.82px;color:#17497a;transform:scaleX(0.9669);">Description</div>
<div class="a" style="left:202px;top:720.5px;width:755px;height:360px;background:#fff;border:1px solid #c9cdd1;border-bottom:none;border-radius:3px 3px 0 0;"></div>
<div class="a" style="left:203px;top:762px;width:753px;height:2px;background:#e6e7e8;"></div>
<svg class="a" style="left:214px;top:733px;" width="18" height="18" viewBox="0 0 18 18"><text x="1" y="16" font-family="Liberation Sans" font-weight="bold" font-size="20" fill="#222">B</text></svg>
<svg class="a" style="left:252px;top:733px;" width="16" height="18" viewBox="0 0 16 18"><path d="M6,1.6 H14 M2,16.4 H10 M10.4,1.6 L5.6,16.4" fill="none" stroke="#222" stroke-width="1.5"/></svg>
<svg class="a" style="left:288px;top:732px;" width="19" height="19" viewBox="0 0 19 19"><g fill="none" stroke="#222" stroke-width="1.6" stroke-linecap="round"><path d="M8.6,5.4 L10.6,3.4 A3.2,3.2 0 0 1 15.4,8 L12,11.4 A3.2,3.2 0 0 1 7.6,11.6"/><path d="M10.2,13.4 L8.2,15.4 A3.2,3.2 0 0 1 3.6,10.8 L7,7.4 A3.2,3.2 0 0 1 11.4,7.2"/></g></svg>
<svg class="a" style="left:323px;top:733px;" width="21" height="19" viewBox="0 0 21 19"><g fill="#222"><circle cx="3" cy="4.3" r="1.6"/><circle cx="3" cy="14" r="1.6"/><rect x="8.4" y="3.5" width="11.6" height="1.6"/><rect x="8.4" y="13.2" width="11.6" height="1.6"/></g></svg>
<svg class="a" style="left:359px;top:732px;" width="22" height="20" viewBox="0 0 22 20"><g fill="#222"><text x="3" y="7.6" font-family="Liberation Sans" font-weight="bold" font-size="7" fill="#222">1</text><text x="2.6" y="19" font-family="Liberation Sans" font-weight="bold" font-size="7" fill="#222">2</text><rect x="10" y="4.5" width="11" height="1.6"/><rect x="10" y="14.2" width="11" height="1.6"/></g></svg>
<div class="a" style="left:393px;top:725.6px;width:1px;height:32.5px;background:#d4d4d4;"></div>
<svg class="a" style="left:404px;top:733px;" width="20" height="17" viewBox="0 0 20 17"><g fill="#9a9a9a"><rect x="1.6" y="1" width="17" height="1.6"/><rect x="6.4" y="7.4" width="12.2" height="1.6"/><rect x="1.6" y="14" width="17" height="1.6"/><path d="M0.4,8.2 L4.6,5.2 V11.2 Z"/></g></svg>
<svg class="a" style="left:441px;top:733px;" width="20" height="17" viewBox="0 0 20 17"><g fill="#222"><rect x="1.6" y="1" width="17" height="1.6"/><rect x="7.4" y="7.4" width="11.2" height="1.6"/><rect x="1.6" y="14" width="17" height="1.6"/><path d="M5.2,8.2 L0.6,5 V11.4 Z"/></g></svg>
<div class="a" style="left:472.5px;top:725.6px;width:1px;height:32.5px;background:#d4d4d4;"></div>
<svg class="a" style="left:484px;top:734px;" width="20" height="16" viewBox="0 0 20 16"><g fill="none" stroke="#9a9a9a" stroke-width="1.6" stroke-linecap="round" stroke-linejoin="round"><path d="M5.6,1.6 L1.6,5.6 L5.6,9.6"/><path d="M1.8,5.6 H12.8 A5,4.6 0 0 1 12.8,14.6 H12"/></g></svg>
<svg class="a" style="left:521px;top:734px;" width="20" height="16" viewBox="0 0 20 16"><g fill="none" stroke="#9a9a9a" stroke-width="1.6" stroke-linecap="round" stroke-linejoin="round"><path d="M13.6,1.6 L17.6,5.6 L13.6,9.6"/><path d="M17.4,5.6 H6.4 A5,4.6 0 0 0 6.4,14.6 H7.2"/></g></svg>
<div class="a" style="left:203px;top:764px;width:753px;height:314px;overflow:hidden;">
<div class="t" style="left:7.70px;top:14.58px;font-size:13.01px;line-height:13.01px;color:#1d5a88;transform:scaleX(0.9255);">Share your EBS snapshots only with specific AWS accounts if needed</div>
<div class="t" style="left:7.70px;top:48.28px;font-size:13.01px;line-height:13.01px;color:#1d5a88;transform:scaleX(0.9398);">Rationale:</div>
<div class="t" style="left:7.70px;top:68.68px;font-size:13.01px;line-height:13.01px;color:#1d5a88;transform:scaleX(0.9427);">By modifying the permissions of a snapshot, you can share it with the AWS accounts that you specify. Users that you have authorized</div>
<div class="t" style="left:7.70px;top:89.08px;font-size:13.01px;line-height:13.01px;color:#1d5a88;transform:scaleX(0.9407);">can use the snapshots you share as the basis for creating their own EBS volumes, while your original snapshot remains unaffected.</div>
<div class="t" style="left:7.70px;top:122.78px;font-size:13.01px;line-height:13.01px;color:#1d5a88;transform:scaleX(0.9434);">If you choose to, you can make your unencrypted snapshots available publicly to all AWS users. You can't make your encrypted</div>
<div class="t" style="left:7.70px;top:143.18px;font-size:13.01px;line-height:13.01px;color:#1d5a88;transform:scaleX(0.9556);">snapshots available publicly.</div>
<div class="t" style="left:7.70px;top:176.88px;font-size:13.01px;line-height:13.01px;color:#1d5a88;transform:scaleX(0.9376);">When you share an encrypted snapshot, you must also share the customer managed CMK used to encrypt the snapshot. You can apply</div>
<div class="t" style="left:7.70px;top:197.28px;font-size:13.01px;line-height:13.01px;color:#1d5a88;transform:scaleX(0.9415);">cross-account permissions to a customer managed CMK either when it is created or at a later time.</div>
<div class="t" style="left:7.70px;top:230.98px;font-size:13.01px;line-height:13.01px;color:#1d5a88;transform:scaleX(0.9409);">Important: When you share a snapshot, you are giving others access to all of the data on the snapshot. Share snapshots only with</div>
<div class="t" style="left:7.70px;top:251.38px;font-size:13.01px;line-height:13.01px;color:#1d5a88;transform:scaleX(0.9555);">people with whom you want to share all of your snapshot data.</div>
<div class="t" style="left:7.70px;top:285.08px;font-size:13.01px;line-height:13.01px;color:#1d5a88;transform:scaleX(0.9549);">Remediation:</div>
<div class="t" style="left:7.70px;top:305.48px;font-size:13.01px;line-height:13.01px;color:#1d5a88;transform:scaleX(0.9395);">Share an encrypted snapshot using the console</div>
</div>
<div class="a" style="left:0px;top:1078px;width:1728px;height:2px;background:#fff;"></div>
<div class="a" style="left:1723px;top:55px;width:1px;height:1024px;background:#f7fafc;"></div>
<div class="a" style="left:1724px;top:55.8px;width:8px;height:1022.4px;background:#535457;border-radius:4px;"></div>
</body></html>
